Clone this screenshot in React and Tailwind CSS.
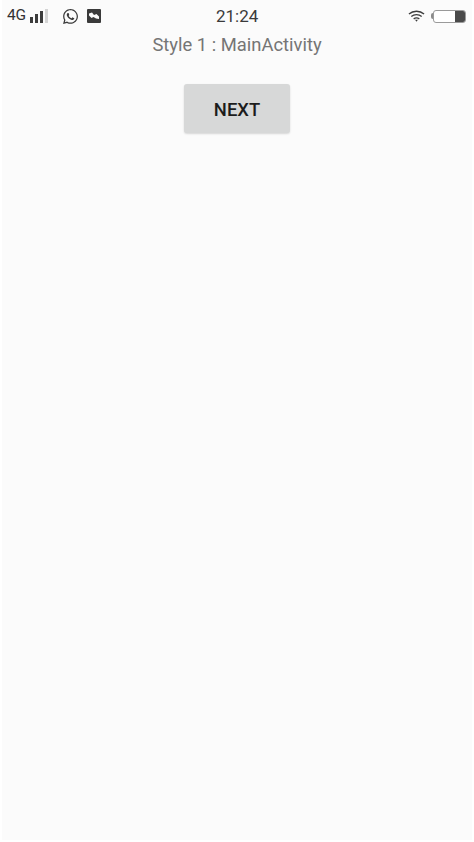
import { FaWhatsapp } from 'react-icons/fa';

function Signal() {
  return (
    <div className="flex items-end gap-[2px] h-[14px] ml-[4px]">
      <span className="w-[3px] h-[6px] bg-[#3c3c3c]" />
      <span className="w-[3px] h-[9px] bg-[#3c3c3c]" />
      <span className="w-[3px] h-[12px] bg-[#3c3c3c]" />
      <span className="w-[3px] h-[14px] bg-[#d4d4d4]" />
    </div>
  );
}

function MessageBadge() {
  return (
    <svg width="14" height="14" viewBox="0 0 14 14" className="ml-[8px]">
      <rect width="14" height="14" rx="1" fill="#3a3a3a" />
      <path d="M2 4.5 L5 3.5 L7 6 L9.5 5 L12 7.5 L12 10 L9 9.5 L6.5 8 L4.5 9 L2 6.5 Z" fill="#fafafa" />
    </svg>
  );
}

function Wifi() {
  return (
    <svg width="17" height="14" viewBox="0 0 18 14" fill="none" stroke="#3c3c3c" strokeWidth="1.4">
      <path d="M1 5 C5.5 1 12.5 1 17 5" />
      <path d="M3.5 7.5 C6.5 5 11.5 5 14.5 7.5" />
      <path d="M6 10 C7.8 8.8 10.2 8.8 12 10" />
      <path d="M7.5 11 L10.5 11 L9 13 Z" fill="#3c3c3c" stroke="none" />
    </svg>
  );
}

function Battery() {
  return (
    <div className="flex items-center ml-[6px]">
      <span className="w-[2px] h-[6px] bg-[#8a8a8a] rounded-l-sm" />
      <div className="w-[33px] h-[13px] border border-[#9a9a9a] rounded-[3px] bg-white flex justify-end overflow-hidden">
        <span className="w-[10px] h-full bg-[#4a4a4a]" />
      </div>
    </div>
  );
}

export default function App() {
  return (
    <div className="w-[474px] h-[842px] bg-[#fff] pl-[2px] pr-[2px] pb-[2px] overflow-hidden" style={{ fontFamily: 'Roboto, sans-serif' }}>
      <div className="h-full bg-[#fbfbfb] flex flex-col items-center">
        <div className="w-full h-[32px] relative flex items-center justify-between pl-[5px] pr-[6px]">
          <div className="flex items-center">
            <span className="text-[15.5px] tracking-[-0.3px] text-[#333]">4G</span>
            <Signal />
            <FaWhatsapp className="ml-[14px] text-[17px] text-[#3a3a3a]" />
            <MessageBadge />
          </div>
          <span className="text-[17px] text-[#3a3a3a] absolute left-[214px] top-[4px]">21:24</span>
          <div className="flex items-center">
            <Wifi />
            <Battery />
          </div>
        </div>
        <p className="text-[18.4px] leading-[26px] text-[#757575]">Style 1 : MainActivity</p>
        <button className="mt-[26px] w-[106px] h-[49px] pt-[2px] bg-[#d7d8d8] rounded-[3px] shadow-[0_1px_2px_rgba(0,0,0,0.15)] text-[18.4px] font-medium text-[#1c1c1c]">
          NEXT
        </button>
      </div>
    </div>
  );
}
